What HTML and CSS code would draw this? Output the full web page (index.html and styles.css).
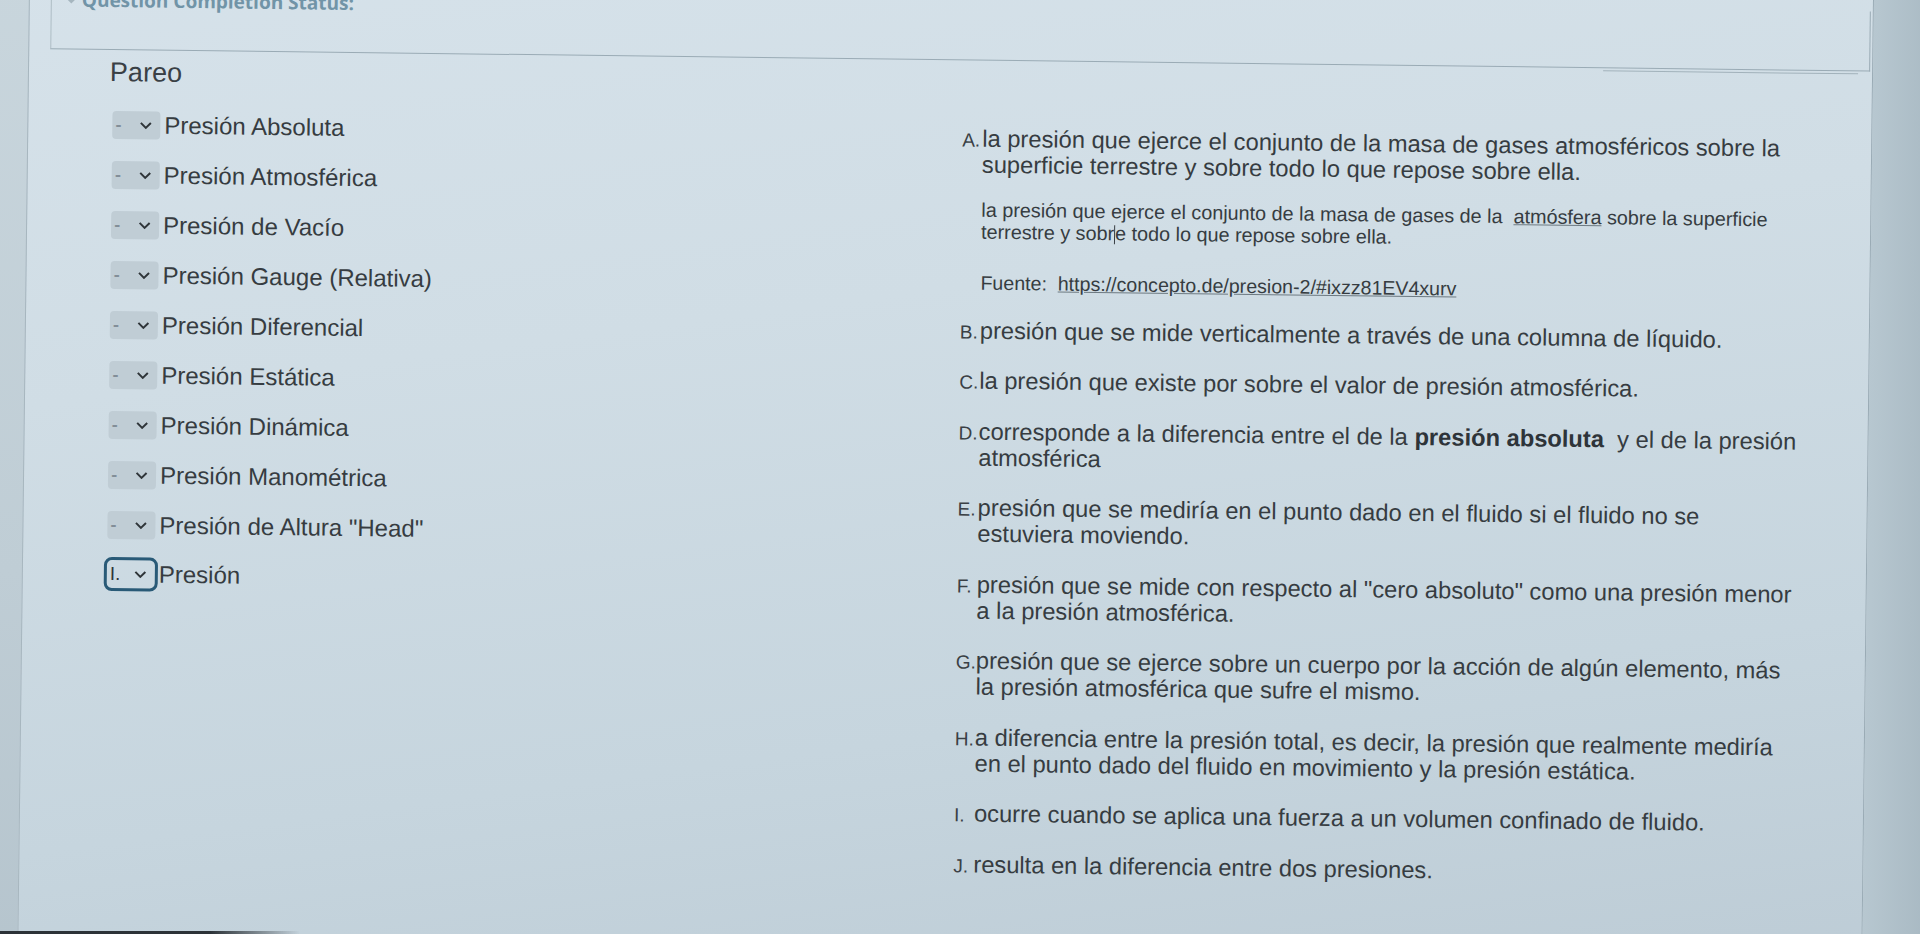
FILE: index.html
```html
<!DOCTYPE html>
<html lang="es">
<head>
<meta charset="utf-8">
<title>Pareo</title>
<link rel="stylesheet" href="styles.css">
</head>
<body>
<div class="page">
  <div class="gutter-left"></div>
  <main class="main">
    <div class="status-panel">
      <span class="status-title"><span class="diamond"></span>Question Completion Status:</span>
    </div>
    <div class="panel-rule"></div>
    <h2 class="title">Pareo</h2>
    <div class="matching">
      <ul class="prompts">
        <li class="prompt"><span class="select"><span class="select-value">-</span><svg class="chev" viewBox="0 0 13 8" width="13" height="8"><path d="M1.5 1.5 L6.5 6.5 L11.5 1.5" fill="none" stroke="#2f3539" stroke-width="2"/></svg></span><span class="prompt-text">Presión Absoluta</span></li>
        <li class="prompt"><span class="select"><span class="select-value">-</span><svg class="chev" viewBox="0 0 13 8" width="13" height="8"><path d="M1.5 1.5 L6.5 6.5 L11.5 1.5" fill="none" stroke="#2f3539" stroke-width="2"/></svg></span><span class="prompt-text">Presión Atmosférica</span></li>
        <li class="prompt"><span class="select"><span class="select-value">-</span><svg class="chev" viewBox="0 0 13 8" width="13" height="8"><path d="M1.5 1.5 L6.5 6.5 L11.5 1.5" fill="none" stroke="#2f3539" stroke-width="2"/></svg></span><span class="prompt-text">Presión de Vacío</span></li>
        <li class="prompt"><span class="select"><span class="select-value">-</span><svg class="chev" viewBox="0 0 13 8" width="13" height="8"><path d="M1.5 1.5 L6.5 6.5 L11.5 1.5" fill="none" stroke="#2f3539" stroke-width="2"/></svg></span><span class="prompt-text">Presión Gauge (Relativa)</span></li>
        <li class="prompt"><span class="select"><span class="select-value">-</span><svg class="chev" viewBox="0 0 13 8" width="13" height="8"><path d="M1.5 1.5 L6.5 6.5 L11.5 1.5" fill="none" stroke="#2f3539" stroke-width="2"/></svg></span><span class="prompt-text">Presión Diferencial</span></li>
        <li class="prompt"><span class="select"><span class="select-value">-</span><svg class="chev" viewBox="0 0 13 8" width="13" height="8"><path d="M1.5 1.5 L6.5 6.5 L11.5 1.5" fill="none" stroke="#2f3539" stroke-width="2"/></svg></span><span class="prompt-text">Presión Estática</span></li>
        <li class="prompt"><span class="select"><span class="select-value">-</span><svg class="chev" viewBox="0 0 13 8" width="13" height="8"><path d="M1.5 1.5 L6.5 6.5 L11.5 1.5" fill="none" stroke="#2f3539" stroke-width="2"/></svg></span><span class="prompt-text">Presión Dinámica</span></li>
        <li class="prompt"><span class="select"><span class="select-value">-</span><svg class="chev" viewBox="0 0 13 8" width="13" height="8"><path d="M1.5 1.5 L6.5 6.5 L11.5 1.5" fill="none" stroke="#2f3539" stroke-width="2"/></svg></span><span class="prompt-text">Presión Manométrica</span></li>
        <li class="prompt"><span class="select"><span class="select-value">-</span><svg class="chev" viewBox="0 0 13 8" width="13" height="8"><path d="M1.5 1.5 L6.5 6.5 L11.5 1.5" fill="none" stroke="#2f3539" stroke-width="2"/></svg></span><span class="prompt-text">Presión de Altura "Head"</span></li>
        <li class="prompt"><span class="select select-focused"><span class="select-value">I.</span><svg class="chev" viewBox="0 0 13 8" width="13" height="8"><path d="M1.5 1.5 L6.5 6.5 L11.5 1.5" fill="none" stroke="#2f3539" stroke-width="2"/></svg></span><span class="prompt-text">Presión</span></li>
      </ul>
      <ol class="answers">
        <li class="answer"><span class="letter">A.</span>
          <div class="answer-text">la presión que ejerce el conjunto de la masa de gases atmosféricos sobre la<br>superficie terrestre y sobre todo lo que repose sobre ella.
            <p class="quote">la presión que ejerce el conjunto de la masa de gases de la&nbsp; <a href="#">atmósfera</a> sobre la superficie<br>terrestre y sobr<span class="caret"></span>e todo lo que repose sobre ella.</p>
            <p class="source">Fuente:&nbsp; <a href="#">https://concepto.de/presion-2/#ixzz81EV4xurv</a></p>
          </div>
        </li>
        <li class="answer"><span class="letter">B.</span><div class="answer-text">presión que se mide verticalmente a través de una columna de líquido.</div></li>
        <li class="answer"><span class="letter">C.</span><div class="answer-text">la presión que existe por sobre el valor de presión atmosférica.</div></li>
        <li class="answer"><span class="letter">D.</span><div class="answer-text">corresponde a la diferencia entre el de la <strong>presión absoluta</strong>&nbsp; y el de la presión<br>atmosférica</div></li>
        <li class="answer"><span class="letter">E.</span><div class="answer-text">presión que se mediría en el punto dado en el fluido si el fluido no se<br>estuviera moviendo.</div></li>
        <li class="answer"><span class="letter">F.</span><div class="answer-text">presión que se mide con respecto al "cero absoluto" como una presión menor<br>a la presión atmosférica.</div></li>
        <li class="answer"><span class="letter">G.</span><div class="answer-text">presión que se ejerce sobre un cuerpo por la acción de algún elemento, más<br>la presión atmosférica que sufre el mismo.</div></li>
        <li class="answer"><span class="letter">H.</span><div class="answer-text">a diferencia entre la presión total, es decir, la presión que realmente mediría<br>en el punto dado del fluido en movimiento y la presión estática.</div></li>
        <li class="answer"><span class="letter">I.</span><div class="answer-text">ocurre cuando se aplica una fuerza a un volumen confinado de fluido.</div></li>
        <li class="answer"><span class="letter">J.</span><div class="answer-text">resulta en la diferencia entre dos presiones.</div></li>
      </ol>
    </div>
  </main>
  <div class="gutter-right"></div>
</div>
<div class="bezel"></div>
</body>
</html>
```
FILE: styles.css
```css
html, body {
  margin: 0;
  height: 934px;
  overflow: hidden;
}
body {
  background: #c6d3db;
  font-family: "Liberation Sans", Arial, sans-serif;
  color: #353b40;
}
.page {
  display: flex;
  width: 1990px;
  height: 1020px;
  margin: -40px 0 0 -30px;
  transform: rotate(0.7deg);
  transform-origin: 140px 110px;
}
.gutter-left {
  flex: 0 0 58px;
  background: linear-gradient(180deg, #c9d6dd 0%, #bfcdd5 60%, #b5c4cd 100%);
}
.main {
  flex: 0 0 1845px;
  box-sizing: border-box;
  padding-top: 40px;
  border-left: 1px solid #a7b6bf;
  border-right: 1px solid #9aabb5;
  background: linear-gradient(172deg, #d6e2ea 0%, #d0dde5 35%, #c6d5de 70%, #bccbd5 100%);
}
.gutter-right {
  flex: 1;
  background: linear-gradient(90deg, #b7c7d0 0%, #a3b4be 100%);
}
.status-panel {
  box-sizing: border-box;
  height: 60px;
  margin: -10px 2px 0 21px;
  padding: 0 0 0 17px;
  border: 1px solid #9aabb5;
  border-top: none;
  border-left-color: #aebdc5;
}
.status-title {
  font-family: "Open Sans", "Liberation Sans", sans-serif;
  font-weight: 700;
  font-size: 19px;
  line-height: 20px;
  color: #7194a7;
}
.diamond {
  display: inline-block;
  width: 5px;
  height: 5px;
  margin-right: 8px;
  background: #a6b6bf;
  transform: rotate(45deg);
  vertical-align: 4px;
}
.panel-rule {
  width: 255px;
  margin: 2px 14px 0 auto;
  border-top: 1px solid #a2b2bb;
}
.title {
  margin: 3px 0 0 81px;
  font-size: 27px;
  line-height: 32px;
  font-weight: normal;
  color: #3a4045;
}
.matching {
  display: grid;
  grid-template-columns: 848px 1fr;
  margin-top: 12.5px;
  padding-left: 84px;
}
.prompts {
  list-style: none;
  margin: 0;
  padding: 0;
}
.prompt {
  display: flex;
  align-items: center;
  height: 49.9px;
}
.select {
  display: flex;
  align-items: center;
  box-sizing: border-box;
  width: 48px;
  height: 28px;
  padding: 0 8px 0 3px;
  border-radius: 4px;
  background: #c0cdd5;
}
.select-value {
  flex: 1;
  font-size: 19px;
  color: #74808a;
}
.select-focused {
  background: transparent;
  outline: 3px solid #295a77;
  outline-offset: 0;
  border-radius: 5px;
}
.select-focused .select-value {
  color: #2f353a;
}
.chev {
  display: block;
}
.prompt-text {
  margin-left: 4px;
  font-size: 24px;
  color: #363c41;
}
.answers {
  list-style: none;
  margin: 0;
  padding: 14.5px 0 0 0;
}
.answer {
  display: flex;
  align-items: baseline;
  margin-bottom: 24.5px;
}
.letter {
  flex: 0 0 20px;
  padding-left: 2px;
  font-size: 19px;
  color: #3a4045;
}
.answer-text {
  font-size: 23.7px;
  line-height: 26px;
  color: #363c41;
}
.answer-text strong {
  color: #2e3439;
}
.quote {
  margin: 21px 0 0;
  font-size: 19.8px;
  line-height: 22px;
}
.source {
  margin: 30px 0 0;
  font-size: 19.6px;
  line-height: 20px;
}
.answer-text a {
  color: inherit;
  text-decoration: underline;
  text-decoration-color: #6d7a82;
}
.caret {
  display: inline-block;
  width: 0;
  height: 19px;
  border-left: 1px solid #3a3f44;
  vertical-align: -4px;
}
.bezel {
  position: fixed;
  left: 0;
  bottom: 0;
  width: 300px;
  height: 3px;
  background: linear-gradient(90deg, #2c3237 70%, rgba(44, 50, 55, 0));
}
```
